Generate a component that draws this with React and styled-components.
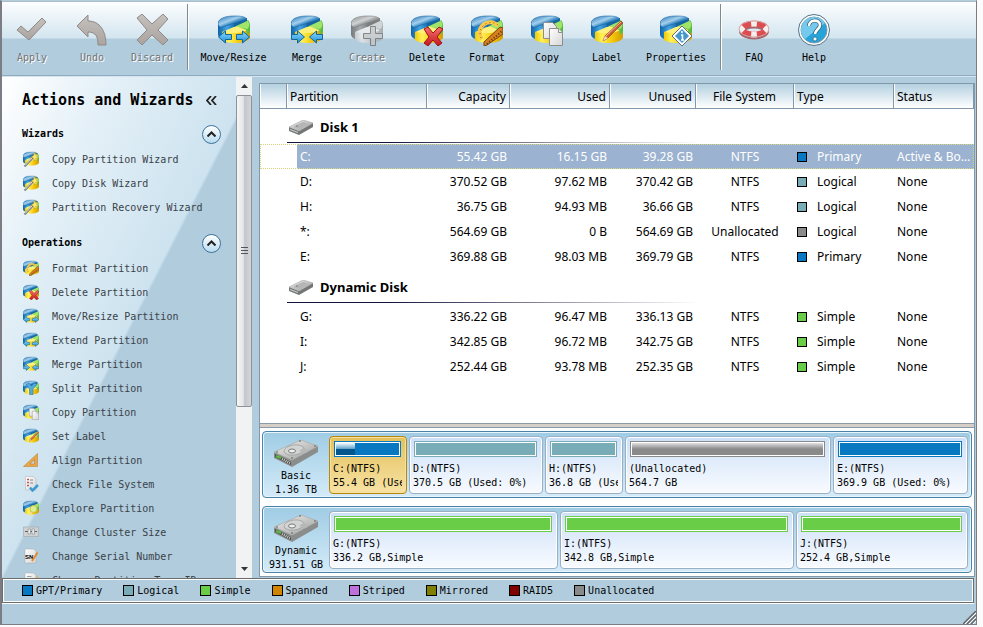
import React from 'react';
import styled, { createGlobalStyle, css } from 'styled-components';

const mono = '"DejaVu Sans Mono", "Liberation Mono", monospace';
const sans = '"Noto Sans", "Open Sans", sans-serif';

const colors = {
  base: '#b1ccdd',
  line: '#7f98aa',
  gpt: '#0878c0',
  logical: '#78adb8',
  simple: '#6acd48',
  spanned: '#d08400',
  striped: '#c070dc',
  mirrored: '#808000',
  raid: '#800000',
  unallocated: '#8a8a8a',
};

const GlobalStyle = createGlobalStyle`
  * {
    box-sizing: border-box;
  }
  body {
    margin: 0;
    background: #fbfbfb;
    font-family: ${mono};
    font-size: 10px;
    color: #000;
  }
  ul {
    list-style: none;
    margin: 0;
    padding: 0;
  }
  button {
    border: 0;
    padding: 0;
    background: none;
    font: inherit;
    color: inherit;
  }
`;

const Page = styled.div`
  height: 100vh;
  padding: 0 6px 2px 0;
`;

const Window = styled.div`
  display: flex;
  flex-direction: column;
  height: 100%;
  border: 1px solid #7c7c84;
  border-top-color: #b8cbd8;
  border-left-width: 2px;
  background: ${colors.base};
`;

const Toolbar = styled.header`
  display: flex;
  flex: none;
  height: 75px;
  border-top: 1px solid #a9c0d0;
  border-bottom: 1px solid #8fabc0;
  background: linear-gradient(#fdfeff, #d3e5ef 36px, ${colors.base} 37px);
`;

const ToolButton = styled.button`
  display: flex;
  flex-direction: column;
  align-items: center;
  width: ${(props) => props.$width || 60}px;
  padding-top: 12px;
  line-height: 14px;

  svg {
    margin-bottom: 5px;
  }

  &:disabled {
    color: #757575;
    text-shadow: 1px 1px 0 #fff;
  }
`;

const Separator = styled.div`
  width: 2px;
  height: 66px;
  margin: 2px ${(props) => (props.$wide ? 2 : 1)}px 0 5px;
  background: #808890;
  border-right: 1px solid #fff;
`;

const Body = styled.div`
  display: flex;
  flex: 1;
  min-height: 0;
  border-top: 1px solid #d5e4ee;
`;

const Sidebar = styled.nav`
  flex: none;
  width: 234px;
  overflow: hidden;
  padding: 12px 15px 0 20px;
  background: linear-gradient(117deg, #fff 0, #e6f1f8 90px, #cde3ef 226px, ${colors.base} 229px);
`;

const SidebarTitle = styled.div`
  display: flex;
  align-items: center;
  justify-content: space-between;
  height: 22px;
  padding-right: 4px;
`;

const H1 = styled.h1`
  margin: 0;
  font-size: 15px;
  line-height: 22px;
`;

const Section = styled.section`
  padding-bottom: 12px;
`;

const SectionHead = styled.div`
  display: flex;
  align-items: center;
  justify-content: space-between;
  height: 24px;
`;

const H2 = styled.h2`
  margin: 0;
  font-size: 10px;
  line-height: 24px;
`;

const SectionToggle = styled.button`
  display: flex;
  align-items: center;
  justify-content: center;
  width: 19px;
  height: 19px;
  border: 1px solid #3c7299;
  border-radius: 50%;
  background: linear-gradient(#fff, #b9dcf0);
`;

const Sections = styled.div`
  padding-top: 11px;
`;

const ActionList = styled.ul`
  padding-top: 1px;
`;

const ActionButton = styled.button`
  display: flex;
  align-items: center;
  gap: 13px;
  height: 24px;
  padding-left: 1px;
  color: #3a4248;
  white-space: nowrap;
`;

const ScrollBar = styled.div`
  display: flex;
  flex-direction: column;
  flex: none;
  width: 16px;
  background: #f1f2f4;
`;

const ScrollArrow = styled.button`
  display: flex;
  align-items: center;
  justify-content: center;
  height: 18px;
`;

const ScrollTrack = styled.div`
  flex: 1;
`;

const ScrollThumb = styled.div`
  display: flex;
  align-items: center;
  justify-content: center;
  height: 67%;
  border: 1px solid #8c9299;
  border-radius: 2px;
  background: linear-gradient(90deg, #f6f6f6, #e4e5e7 45%, #c2c5ca 55%, #d4d6da);
`;

const Main = styled.main`
  display: flex;
  flex-direction: column;
  flex: 1;
  min-width: 0;
  margin: 6px 1px 1px 7px;
  border: 1px solid ${colors.line};
  background: #fff;
`;

const Table = styled.table`
  width: 100%;
  table-layout: fixed;
  border-collapse: separate;
  border-spacing: 0;
  font-family: ${sans};
  font-size: 12px;
  line-height: 16px;
`;

const cellSpace = css`
  padding: 0 3px;
  text-align: ${(props) => props.$align || 'left'};
  white-space: nowrap;
  overflow: hidden;
  text-overflow: ellipsis;
`;

const Th = styled.th`
  ${cellSpace}
  height: 25px;
  padding-top: 1px;
  font-weight: 400;
  border-right: 1px solid #8298aa;
  border-bottom: 1px solid #8298aa;
  background: linear-gradient(#b4d0e0, #fff);
  box-shadow: inset 1px 0 0 #fff;
`;

const Td = styled.td`
  ${cellSpace}
  height: 25px;
`;

const NameCell = styled(Td)`
  padding-left: 13px;
`;

const Row = styled.tr`
  ${(props) => props.$selected && css`
    color: #fff;
    outline: 1px dotted #d6d67c;
    outline-offset: -1px;

    ${Td}:not(:first-child) {
      background: #9bb2d0;
    }
    ${NameCell}:not(:first-child) {
      background: linear-gradient(90deg, #fff 10px, #9bb2d0 10px);
    }
  `}
`;

const GroupCell = styled.td`
  height: 35px;
  padding: 0;
  vertical-align: top;
`;

const GroupTitle = styled.div`
  display: flex;
  align-items: center;
  gap: 7px;
  height: 34px;
  padding: 3px 0 0 2px;
  font-size: 13px;
  font-weight: 700;
  border-bottom: 1px solid;
  border-image: linear-gradient(90deg, #15153c, #15153c 15%, #fff 60%) 1;
`;

const TypeCell = styled.span`
  display: flex;
  align-items: center;
  gap: 10px;
`;

const Swatch = styled.span`
  flex: none;
  width: ${(props) => props.$size || 10}px;
  height: ${(props) => props.$size || 10}px;
  border: 1px solid #000;
  background: ${(props) => props.$color};
`;

const TableArea = styled.section`
  flex: 1;
  min-height: 0;
  overflow: hidden;
`;

const Splitter = styled.div`
  flex: none;
  height: 5px;
  border-top: 1px solid #8a9aa6;
  border-bottom: 1px solid #8a9aa6;
  background: #d5cfc8;
`;

const DiskMap = styled.section`
  display: flex;
  flex-direction: column;
  gap: 8px;
  padding: 3px 2px;
`;

const Disk = styled.div`
  display: flex;
  height: 67px;
  padding: 3px 3px 3px 1px;
  border: 1px solid #4983aa;
  border-radius: 4px;
  background: linear-gradient(#9fcce4, #d4ebf9);
  box-shadow: inset 0 0 0 1px #eaf5fb;
`;

const DiskInfo = styled.div`
  display: flex;
  flex-direction: column;
  align-items: center;
  flex: none;
  width: 64px;
  margin-right: 1px;
  padding-top: 4px;
  line-height: 14px;

  svg {
    margin-bottom: 1px;
  }
`;

const Volumes = styled.div`
  display: flex;
  flex: 1;
  gap: 2px;
  min-width: 0;
  padding-top: 1px;
`;

const Volume = styled.button`
  display: flex;
  flex-direction: column;
  align-items: stretch;
  flex: ${(props) => props.$share} 1 0;
  min-width: 0;
  height: 58px;
  padding: 4px 4px 0 3px;
  border: 1px solid ${(props) => (props.$selected ? '#b8860b' : '#9aaec4')};
  border-radius: 4px;
  background: ${(props) => (props.$selected
    ? 'linear-gradient(#e4c15c, #f7e2a4)'
    : 'linear-gradient(#cde0f8, #f8fbff)')};
  box-shadow: inset 0 0 0 1px ${(props) => (props.$selected ? '#f6e2a0' : '#fff')};
  text-align: left;
  line-height: 14px;
  white-space: nowrap;
`;

const Bar = styled.span`
  flex: none;
  height: 16px;
  margin: 0 1px 5px;
  padding: 1px;
  border: 1px solid ${(props) => props.$color};
  background: #fff;
`;

const BarFill = styled.span`
  display: block;
  height: 12px;
  background: ${(props) => (props.$glossy
    ? 'linear-gradient(#e0e0e0, #8a8a8a 50%)'
    : props.$color)};
`;

const BarUsed = styled.span`
  display: block;
  height: 100%;
  background: linear-gradient(#f4fafd, #5c9fc8 50%, #05568c 50%);
`;

const VolumeText = styled.span`
  overflow: hidden;
`;

const Legend = styled.ul`
  display: flex;
  align-items: center;
  flex: none;
  gap: 21px;
  height: 25px;
  margin-right: 2px;
  padding-left: 19px;
  border: 1px solid #6c6c6c;
  box-shadow: inset 0 0 0 1px #fff, 0 1px 0 #fff;
`;

const LegendItem = styled.li`
  display: flex;
  align-items: center;
  gap: 3px;
  line-height: 14px;
`;

const StatusBar = styled.footer`
  display: flex;
  flex: none;
  align-items: flex-end;
  justify-content: flex-end;
  height: 21px;
`;

const IconDefs = () => (
  <svg width="0" height="0" display="block" aria-hidden="true">
    <defs>
      <linearGradient id="blue" x1="0" y1="0" x2="1" y2="1">
        <stop offset="0" stopColor="#1f6fb4" />
        <stop offset=".4" stopColor="#a5d0ec" />
        <stop offset=".55" stopColor="#3e8dc6" />
        <stop offset="1" stopColor="#125c9f" />
      </linearGradient>
      <linearGradient id="blueSide">
        <stop offset="0" stopColor="#0f61a8" />
        <stop offset=".5" stopColor="#45a6e2" />
        <stop offset="1" stopColor="#0f61a8" />
      </linearGradient>
      <linearGradient id="green">
        <stop offset="0" stopColor="#b5f07a" />
        <stop offset="1" stopColor="#52b53a" />
      </linearGradient>
      <linearGradient id="yellow">
        <stop offset="0" stopColor="#f0c800" />
        <stop offset=".25" stopColor="#fff25c" />
        <stop offset=".6" stopColor="#f5c90c" />
        <stop offset="1" stopColor="#d29a00" />
      </linearGradient>
      <linearGradient id="arrow" x1="0" y1="0" x2="0" y2="1">
        <stop offset="0" stopColor="#8fdcff" />
        <stop offset="1" stopColor="#1b8fd4" />
      </linearGradient>
      <linearGradient id="grey" x1="0" y1="0" x2="0" y2="1">
        <stop offset="0" stopColor="#c6c1bd" />
        <stop offset="1" stopColor="#aaa39f" />
      </linearGradient>
      <linearGradient id="red" x1="0" y1="0" x2="0" y2="1">
        <stop offset="0" stopColor="#f4726c" />
        <stop offset="1" stopColor="#c4161c" />
      </linearGradient>
      <linearGradient id="paper" x1="0" y1="0" x2="1" y2="1">
        <stop offset="0" stopColor="#fff" />
        <stop offset="1" stopColor="#d5d5d5" />
      </linearGradient>
      <linearGradient id="metal" x1="0" y1="0" x2="1" y2="1">
        <stop offset="0" stopColor="#f2f2f0" />
        <stop offset="1" stopColor="#9b9b99" />
      </linearGradient>
    </defs>
  </svg>
);

const Pie = () => (
  <g>
    <path d="M4 18 18 12l14 2v10c-3 4-9 5-16 5-5 0-9-1-12-3Z" fill="url(#yellow)" />
    <path d="m5 18 13-6 13 2c-3 4-9 5-15 5-4 0-8 0-11-1Z" fill="#fdf07c" />
    <path d="M30 6c2 2 2 5 2 7v5l-3 3-1-5-10-4Z" fill="url(#green)" />
    <path d="m29 6-12 6 12 3c3-2 3-6 0-9Z" fill="#9fe568" />
    <path d="M0 8v12c0 3 2 4 4 5v-7l14-6V7Z" fill="url(#blueSide)" />
    <path d="m16 13 13-6V4L16 8Z" fill="#15659f" />
    <path d="M0 9C1 4 8 2 16 2c5 0 10 0 13 3L3 13.500C1 13 0 11 0 9Z" fill="url(#blue)" stroke="#1666a6" strokeWidth=".6" />
  </g>
);

const RightArrow = ({ x }) => (
  <path transform={`translate(${x} 17)`} d="M0 3.500h6V0l7 6-7 6V8.500H0Z" fill="url(#arrow)" stroke="#15649c" />
);

const LeftArrow = ({ x }) => (
  <path transform={`translate(${x} 17)`} d="M13 3.500H7V0L0 6l7 6V8.500h6Z" fill="url(#arrow)" stroke="#15649c" />
);

const Pencil = () => (
  <g>
    <path d="m12 27 2-5L30 7l2 2-15 15Z" fill="#cc5a38" stroke="#8b3a22" strokeWidth=".6" />
    <path d="m15 22 15-14" stroke="#f7b690" />
    <path d="m12 27 2-5 3 2Z" fill="#f4ddb2" />
  </g>
);

const overlays = {
  resize: <><LeftArrow x={0.5} /><RightArrow x={18.5} /></>,
  merge: <><RightArrow x={0.5} /><LeftArrow x={18.5} /></>,
  create: <path d="M19.500 12.500h5v7h7v5h-7v7h-5v-7h-7v-5h7Z" fill="#c4c4c4" stroke="#666" />,
  delete: <path d="m13 15 4-2 5 6 6-6 4 2-6 8 5 6-4 3-5-6-5 6-4-3 5-6Z" fill="url(#red)" stroke="#a30f14" />,
  format: (
    <g>
      <path d="M11 25a10 10 0 0 1 16-13" fill="none" stroke="#fbc94a" strokeWidth="4" />
      <path d="M10 24a11 11 0 0 1 17-13" fill="none" stroke="#84520a" strokeDasharray="1 3" />
      <path d="m13 28 16-15 3 1v6L16 31l-3 1Z" fill="#d5801d" stroke="#7b430c" />
      <path d="m16 30 15-13" stroke="#5a3209" strokeWidth="2" strokeDasharray="1 2" />
    </g>
  ),
  copy: (
    <g stroke="#8d8d8d">
      <path d="M12.500 8.500h9l4 4v12h-13Z" fill="url(#paper)" />
      <path d="M18.500 14.500h9l4 4v13h-13Z" fill="url(#paper)" />
      <path d="M27.500 14.500v4h4" fill="#eee" />
    </g>
  ),
  label: <Pencil />,
  properties: (
    <g>
      <path d="m22 12 10 10-10 10-10-10Z" fill="#fff" stroke="#61717c" />
      <path d="m22 15 7 7-7 7-7-7Z" fill="#4698cc" />
      <path d="M22 17v2m-1 2h1.500v5M21 26h3" stroke="#fff" strokeWidth="1.500" fill="none" />
    </g>
  ),
  split: <path d="m6 9 6-3 5 6 5-6 6 3-8 9v11h-7V18Z" fill="#55a9da" stroke="#1c6ea8" />,
  wizard: (
    <g>
      <path d="m3 31 17-18" stroke="#77797b" strokeWidth="4" />
      <path d="m4 29 15-16" stroke="#fff" strokeWidth="1.500" />
      <path d="m23 2 2 5 5-1-3 5 4 5-6-1-3 5-1-6-5-2 5-3Z" fill="#ffe96b" stroke="#b49017" />
    </g>
  ),
  explore: (
    <g>
      <path d="m17 23-4 8" stroke="#f2e38b" strokeWidth="5" />
      <circle cx="21" cy="18" r="7" fill="#d8ef92" stroke="#c7be4b" strokeWidth="2" />
    </g>
  ),
};

const plainIcons = {
  apply: <path d="m1 16 4-4 7 6L26 4l4 4-17 18Z" fill="url(#grey)" stroke="#8f8987" />,
  undo: <path d="M1 12 12 1v6c12 0 18 10 18 24h-8c0-8-2-13-10-13v5Z" fill="url(#grey)" stroke="#8f8987" />,
  discard: <path d="m1 4 5-4 10 10L27 0l5 5-10 11 10 10-5 5-11-10L6 31l-5-5 10-10Z" fill="url(#grey)" stroke="#8f8987" />,
  faq: (
    <g>
      <ellipse cx="16" cy="17" rx="12" ry="5.500" fill="none" stroke="#a8666b" strokeWidth="6" />
      <ellipse cx="16" cy="15" rx="12" ry="5.500" fill="none" stroke="#df4d50" strokeWidth="6" />
      <ellipse cx="16" cy="15" rx="12" ry="5.500" fill="none" stroke="#f7efee" strokeWidth="6" pathLength="80" strokeDasharray="8 12" strokeDashoffset="4" />
      <ellipse cx="16" cy="15" rx="15" ry="8" fill="none" stroke="#cfa9a9" />
    </g>
  ),
  help: (
    <g>
      <circle cx="16" cy="16" r="15.500" fill="#fff" stroke="#527186" />
      <circle cx="16" cy="16" r="13" fill="#26a3d9" stroke="#7d98a8" />
      <path d="M3 16a13 13 0 0 1 24-7L7 25a13 13 0 0 1-4-9Z" fill="#74c9ed" />
      <path d="M11 12c0-7 11-7 11-1 0 4-5 5-5 9" fill="none" stroke="#315c75" strokeWidth="4" />
      <path d="M11 12c0-7 11-7 11-1 0 4-5 5-5 9" fill="none" stroke="#fff" strokeWidth="2.600" />
      <circle cx="17" cy="25" r="2" fill="#fff" stroke="#315c75" strokeWidth=".7" />
    </g>
  ),
  align: (
    <g>
      <path d="M1 29h28V3Z" fill="#e8a64a" stroke="#b77621" />
      <path d="M14 24h9v-9Z" fill="#c3d7e2" stroke="#b77621" />
    </g>
  ),
  check: (
    <g>
      <path d="M5 1h16l5 5v22H5Z" fill="url(#paper)" stroke="#acacac" />
      <path d="M8 7h4m-4 6h4m-4 6h4" stroke="#c55656" strokeWidth="3" />
      <path d="M14 8h6m-6 6h6" stroke="#888" strokeWidth="2" />
      <path d="m14 23 5 6L30 18" stroke="#3d99d2" strokeWidth="5" fill="none" />
    </g>
  ),
  cluster: (
    <g>
      <path d="M1 6h30v19H1Z" fill="#cfd1d2" stroke="#979ea2" />
      <path d="M4 15h24" stroke="#5c6266" strokeWidth="2" />
      <path d="M10 10h5v10h-5Zm8 0h5v10h-5Z" fill="#eee" stroke="#71777b" />
    </g>
  ),
  serial: (
    <g>
      <path d="M4 2h17l5 5v23H4Z" fill="url(#paper)" stroke="#aaa" />
      <text x="4" y="22" fontSize="12" fontWeight="700" fontFamily="Liberation Sans, sans-serif">SN</text>
      <path d="m18 26 11-17" stroke="#e58a28" strokeWidth="4" />
    </g>
  ),
  typeId: (
    <g>
      <path d="M4 2h17l5 5v23H4Z" fill="url(#paper)" stroke="#aaa" />
      <path d="M8 9h9M8 14h12" stroke="#9ba3a8" strokeWidth="2" />
      <path d="m18 26 11-17" stroke="#d7b45f" strokeWidth="4" />
    </g>
  ),
};

const Glyph = styled.svg`
  display: block;
  flex: none;
  filter: ${(props) => (props.$grey ? 'grayscale(1) opacity(0.75)' : 'none')};
`;

const Icon = ({ name, size = 16, grey }) => (
  <Glyph width={size} height={size} viewBox="0 0 32 32" $grey={grey} aria-hidden="true">
    {plainIcons[name] || (
      <>
        <Pie />
        {overlays[name]}
      </>
    )}
  </Glyph>
);

const DriveIcon = () => (
  <Glyph width="46" height="29" viewBox="0 0 46 29" aria-hidden="true">
    <path d="M1 13v6l18 9 26-15V7L19 21Z" fill="#8b8d8c" />
    <path d="M1 13 28 1l17 6-26 14Z" fill="url(#metal)" stroke="#a8aaa8" strokeWidth=".7" />
    <ellipse cx="21" cy="11" rx="10" ry="5" fill="#d2d4d3" stroke="#8f9190" strokeWidth=".6" transform="rotate(-8 21 11)" />
    <ellipse cx="19" cy="12" rx="3.500" ry="2" fill="#eee" stroke="#777" />
    <path d="m26 12 7 2 3-3-6-2Z" fill="#b6b8b7" />
    <path d="m2 15 16 8v3L2 18Z" fill="#484c4b" />
    <path d="m3 17 5 2" stroke="#5bbd43" strokeWidth="2" />
    <path d="m9 20 8 4" stroke="#d9d9d9" strokeWidth="2" strokeDasharray="1 1" />
    <g fill="#555">
      <circle cx="4" cy="13" r=".8" />
      <circle cx="27" cy="2" r=".8" />
      <circle cx="42" cy="7" r=".8" />
      <circle cx="19" cy="19" r=".8" />
    </g>
  </Glyph>
);

const SmallDriveIcon = () => (
  <Glyph width="24" height="15" viewBox="0 0 24 15" aria-hidden="true">
    <path d="M0 7v4l10 4 14-8V3L10 11Z" fill="#737675" />
    <path d="M0 7 14 0l10 3-14 8Z" fill="url(#metal)" stroke="#999" strokeWidth=".5" />
    <path d="M4 7 14 2l6 2-10 5Z" fill="#b4b6b5" />
    <path d="m1 9 8 3v1l-8-3Z" fill="#d3d3d3" />
    <circle cx="8" cy="6" r=".7" fill="#666" />
  </Glyph>
);

const tools = [
  { name: 'apply', label: 'Apply', disabled: true },
  { name: 'undo', label: 'Undo', disabled: true },
  { name: 'discard', label: 'Discard', disabled: true },
  { separator: true, name: 'first' },
  { name: 'resize', label: 'Move/Resize', width: 87 },
  { name: 'merge', label: 'Merge' },
  { name: 'create', label: 'Create', disabled: true },
  { name: 'delete', label: 'Delete' },
  { name: 'format', label: 'Format' },
  { name: 'copy', label: 'Copy' },
  { name: 'label', label: 'Label' },
  { name: 'properties', label: 'Properties', width: 78 },
  { separator: true, name: 'second', wide: true },
  { name: 'faq', label: 'FAQ' },
  { name: 'help', label: 'Help' },
];

const sections = [
  {
    title: 'Wizards',
    actions: [
      ['wizard', 'Copy Partition Wizard'],
      ['wizard', 'Copy Disk Wizard'],
      ['wizard', 'Partition Recovery Wizard'],
    ],
  },
  {
    title: 'Operations',
    actions: [
      ['format', 'Format Partition'],
      ['delete', 'Delete Partition'],
      ['resize', 'Move/Resize Partition'],
      ['resize', 'Extend Partition'],
      ['merge', 'Merge Partition'],
      ['split', 'Split Partition'],
      ['copy', 'Copy Partition'],
      ['label', 'Set Label'],
      ['align', 'Align Partition'],
      ['check', 'Check File System'],
      ['explore', 'Explore Partition'],
      ['cluster', 'Change Cluster Size'],
      ['serial', 'Change Serial Number'],
      ['typeId', 'Change Partition Type ID'],
    ],
  },
];

const columns = [
  { label: '', width: 27 },
  { label: 'Partition', width: 140 },
  { label: 'Capacity', width: 83, align: 'right' },
  { label: 'Used', width: 100, align: 'right' },
  { label: 'Unused', width: 86, align: 'right' },
  { label: 'File System', width: 98, align: 'center' },
  { label: 'Type', width: 100 },
  { label: 'Status' },
];

const groups = [
  {
    title: 'Disk 1',
    rows: [
      ['C:', '55.42 GB', '16.15 GB', '39.28 GB', 'NTFS', 'gpt', 'Primary', 'Active & Boot'],
      ['D:', '370.52 GB', '97.62 MB', '370.42 GB', 'NTFS', 'logical', 'Logical', 'None'],
      ['H:', '36.75 GB', '94.93 MB', '36.66 GB', 'NTFS', 'logical', 'Logical', 'None'],
      ['*:', '564.69 GB', '0 B', '564.69 GB', 'Unallocated', 'unallocated', 'Logical', 'None'],
      ['E:', '369.88 GB', '98.03 MB', '369.79 GB', 'NTFS', 'gpt', 'Primary', 'None'],
    ],
  },
  {
    title: 'Dynamic Disk',
    rows: [
      ['G:', '336.22 GB', '96.47 MB', '336.13 GB', 'NTFS', 'simple', 'Simple', 'None'],
      ['I:', '342.85 GB', '96.72 MB', '342.75 GB', 'NTFS', 'simple', 'Simple', 'None'],
      ['J:', '252.44 GB', '93.78 MB', '252.35 GB', 'NTFS', 'simple', 'Simple', 'None'],
    ],
  },
];

const disks = [
  {
    kind: 'Basic',
    size: '1.36 TB',
    volumes: [
      { name: 'C:(NTFS)', info: '55.4 GB (Used: 29%)', color: 'gpt', share: 69, used: 30, selected: true },
      { name: 'D:(NTFS)', info: '370.5 GB (Used: 0%)', color: 'logical', share: 125 },
      { name: 'H:(NTFS)', info: '36.8 GB (Used: 0%)', color: 'logical', share: 69 },
      { name: '(Unallocated)', info: '564.7 GB', color: 'unallocated', share: 197 },
      { name: 'E:(NTFS)', info: '369.9 GB (Used: 0%)', color: 'gpt', share: 126 },
    ],
  },
  {
    kind: 'Dynamic',
    size: '931.51 GB',
    volumes: [
      { name: 'G:(NTFS)', info: '336.2 GB,Simple', color: 'simple', share: 220 },
      { name: 'I:(NTFS)', info: '342.8 GB,Simple', color: 'simple', share: 225 },
      { name: 'J:(NTFS)', info: '252.4 GB,Simple', color: 'simple', share: 163 },
    ],
  },
];

const legend = [
  ['gpt', 'GPT/Primary'],
  ['logical', 'Logical'],
  ['simple', 'Simple'],
  ['spanned', 'Spanned'],
  ['striped', 'Striped'],
  ['mirrored', 'Mirrored'],
  ['raid', 'RAID5'],
  ['unallocated', 'Unallocated'],
];

const PartitionRow = ({ row, selected }) => {
  const [name, capacity, used, unused, fileSystem, color, type, status] = row;
  return (
    <Row $selected={selected}>
      <Td />
      <NameCell>{name}</NameCell>
      <Td $align="right">{capacity}</Td>
      <Td $align="right">{used}</Td>
      <Td $align="right">{unused}</Td>
      <Td $align="center">{fileSystem}</Td>
      <Td>
        <TypeCell>
          <Swatch $color={colors[color]} />
          {type}
        </TypeCell>
      </Td>
      <Td>{status}</Td>
    </Row>
  );
};

const PartitionTable = () => (
  <Table>
    <colgroup>
      {columns.map((column) => <col key={column.label} width={column.width} />)}
    </colgroup>
    <thead>
      <tr>
        {columns.map((column) => (
          <Th key={column.label} $align={column.align}>{column.label}</Th>
        ))}
      </tr>
    </thead>
    {groups.map((group) => (
      <tbody key={group.title}>
        <tr>
          <td />
          <GroupCell colSpan="7">
            <GroupTitle>
              <SmallDriveIcon />
              {group.title}
            </GroupTitle>
          </GroupCell>
        </tr>
        {group.rows.map((row) => (
          <PartitionRow key={row[0]} row={row} selected={row[0] === 'C:'} />
        ))}
      </tbody>
    ))}
  </Table>
);

const App = () => (
  <Page>
    <GlobalStyle />
    <Window>
      <IconDefs />
      <Toolbar>
        {tools.map((tool) => (tool.separator ? <Separator key={tool.name} $wide={tool.wide} /> : (
          <ToolButton key={tool.name} type="button" disabled={tool.disabled} $width={tool.width}>
            <Icon name={tool.name} size={32} grey={tool.name === 'create'} />
            {tool.label}
          </ToolButton>
        )))}
      </Toolbar>
      <Body>
        <Sidebar>
          <SidebarTitle>
            <H1>Actions and Wizards</H1>
            <button type="button" aria-label="Collapse panel">
              <Glyph width="11" height="9" viewBox="0 0 11 9">
                <path d="M5 0 1 4.500 5 9M10 0 6 4.500 10 9" fill="none" stroke="#222" strokeWidth="1.800" />
              </Glyph>
            </button>
          </SidebarTitle>
          <Sections>
            {sections.map((section) => (
              <Section key={section.title}>
                <SectionHead>
                  <H2>{section.title}</H2>
                  <SectionToggle type="button" aria-label={`Collapse ${section.title}`}>
                    <Glyph width="9" height="6" viewBox="0 0 9 6">
                      <path d="m.5 5.500 4-4 4 4" fill="none" stroke="#222" strokeWidth="2" />
                    </Glyph>
                  </SectionToggle>
                </SectionHead>
                <ActionList>
                  {section.actions.map(([icon, label]) => (
                    <li key={label}>
                      <ActionButton type="button">
                        <Icon name={icon} />
                        {label}
                      </ActionButton>
                    </li>
                  ))}
                </ActionList>
              </Section>
            ))}
          </Sections>
        </Sidebar>
        <ScrollBar>
          <ScrollArrow type="button" aria-label="Scroll up">
            <Glyph width="7" height="4" viewBox="0 0 7 4"><path d="M0 4 3.500 0 7 4Z" fill="#333" /></Glyph>
          </ScrollArrow>
          <ScrollTrack>
            <ScrollThumb>
              <Glyph width="7" height="8" viewBox="0 0 7 8">
                <path d="M0 .5h7M0 3.500h7M0 6.500h7" stroke="#555" />
              </Glyph>
            </ScrollThumb>
          </ScrollTrack>
          <ScrollArrow type="button" aria-label="Scroll down">
            <Glyph width="7" height="4" viewBox="0 0 7 4"><path d="M0 0 3.500 4 7 0Z" fill="#333" /></Glyph>
          </ScrollArrow>
        </ScrollBar>
        <Main>
          <TableArea>
            <PartitionTable />
          </TableArea>
          <Splitter />
          <DiskMap>
            {disks.map((disk) => (
              <Disk key={disk.kind}>
                <DiskInfo>
                  <DriveIcon />
                  <span>{disk.kind}</span>
                  <span>{disk.size}</span>
                </DiskInfo>
                <Volumes>
                  {disk.volumes.map((volume) => (
                    <Volume key={volume.name} type="button" $share={volume.share} $selected={volume.selected}>
                      <Bar $color={colors[volume.color]}>
                        <BarFill $color={colors[volume.color]} $glossy={volume.color === 'unallocated'}>
                          {volume.used && <BarUsed style={{ width: `${volume.used}%` }} />}
                        </BarFill>
                      </Bar>
                      <VolumeText>{volume.name}</VolumeText>
                      <VolumeText>{volume.info}</VolumeText>
                    </Volume>
                  ))}
                </Volumes>
              </Disk>
            ))}
          </DiskMap>
        </Main>
      </Body>
      <Legend>
        {legend.map(([color, label]) => (
          <LegendItem key={color}>
            <Swatch $color={colors[color]} $size={11} />
            {label}
          </LegendItem>
        ))}
      </Legend>
      <StatusBar>
        <Glyph width="13" height="13" viewBox="0 0 13 13" aria-hidden="true">
          <path d="M0 13 13 0M4 13l9-9M8 13l5-5" stroke="#666" strokeWidth="1.500" />
          <path d="m2 13 11-11M6 13l7-7M10 13l3-3" stroke="#fff" />
        </Glyph>
      </StatusBar>
    </Window>
  </Page>
);

export default App;
